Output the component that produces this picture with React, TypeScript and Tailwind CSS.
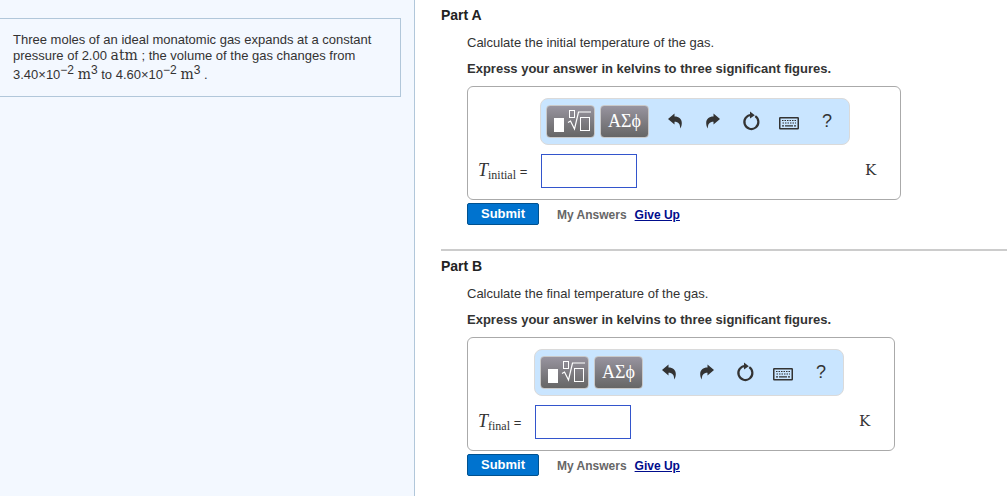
import { useId } from "react";

type PartProps = {
  title: string;
  question: string;
  subscript: string;
  labelWidth: string;
};

const ICON_BUTTON = "flex h-8 w-[38px] items-center justify-center text-[#333]";
const TEMPLATE_BUTTON =
  "flex h-[33px] w-[49px] items-center justify-center rounded border border-[#c9c9c9] bg-linear-to-b from-[#98949f] to-[#666] text-white";

export default function App() {
  return (
    <div className="flex min-h-screen bg-white font-['Liberation_Sans',Arial,sans-serif] text-[13px] text-[#333]">
      <aside className="w-[415px] shrink-0 border-r border-[#b1c7da] bg-[#f3f8ff] pt-[18px] pr-[13px]">
        <div className="border border-l-0 border-[#b1c7da] pt-[13px] pr-3 pb-[10px] pl-[13px]">
          <p className="leading-4">
            Three moles of an ideal monatomic gas expands at a constant pressure of 2.00 <Unit>atm</Unit> ; the volume of the gas
            changes from
          </p>
          <p className="leading-[22px]">
            3.40×10
            <Power>−2</Power> <Unit>m</Unit>
            <Power>3</Power> to 4.60×10
            <Power>−2</Power> <Unit>m</Unit>
            <Power>3</Power> .
          </p>
        </div>
      </aside>

      <main className="min-w-0 flex-1 pl-[26px]">
        <Part title="Part A" question="Calculate the initial temperature of the gas." subscript="initial" labelWidth="w-[62px]" />
        <hr className="mt-6 border-t-2 border-[#ccc]" />
        <Part title="Part B" question="Calculate the final temperature of the gas." subscript="final" labelWidth="w-[56px]" />
      </main>
    </div>
  );
}

function Part({ title, question, subscript, labelWidth }: PartProps) {
  const inputId = useId();

  return (
    <section className="pt-[7px]">
      <h2 className="text-sm leading-4 font-bold text-[#222]">{title}</h2>
      <div className="pl-[26px]">
        <p className="mt-3 leading-4">{question}</p>
        <p className="mt-[10px] leading-4 font-bold">Express your answer in kelvins to three significant figures.</p>

        <form onSubmit={(event) => event.preventDefault()}>
          <div className="mt-[9px] flex w-fit items-end rounded-md border border-[#aaa] py-[11px] pl-[10px]">
            <label htmlFor={inputId} className={`flex h-[34px] shrink-0 items-center pb-[2px] ${labelWidth}`}>
              <span className="whitespace-nowrap">
                <i className="font-['Liberation_Serif',serif] text-lg">T</i>
                <sub className="bottom-[-3px] font-['Liberation_Serif',serif] text-xs">{subscript}</sub> =
              </span>
            </label>
            <div>
              <Toolbar />
              <input id={inputId} type="text" className="mt-[9px] ml-px block h-[34px] w-24 border border-[#3355cc] bg-white px-2 outline-none" />
            </div>
            <span className="flex h-[34px] w-[50px] items-center pb-[2px] pl-[15px] font-['DejaVu_Serif',serif] text-[15px]">K</span>
          </div>

          <div className="mt-[3px] flex items-center text-xs font-bold">
            <button type="submit" className="h-[22px] w-[72px] rounded-xs border border-[#00518f] bg-[#0073cf] text-[13px] text-white">
              Submit
            </button>
            <span className="ml-[18px] pt-[2px] text-[#666]">My Answers</span>
            <a href="#give-up" className="ml-2 pt-[2px] text-[#000c8c] underline">
              Give Up
            </a>
          </div>
        </form>
      </div>
    </section>
  );
}

function Toolbar() {
  return (
    <div className="flex h-[47px] w-[310px] items-center rounded-lg border border-[#dadada] bg-[#c9e5ff] pb-px pl-[5px]">
      <button type="button" aria-label="Templates" className={TEMPLATE_BUTTON}>
        <svg width="41" height="24" viewBox="0 0 41 24" fill="none" stroke="currentColor">
          <rect x="4" y="9" width="10" height="14" fill="currentColor" stroke="none" />
          <path d="M18 13.5l2.500-1.500 4 8 4-17h12.500" strokeWidth="1.200" />
          <rect x="19.500" y="1.500" width="5" height="7" strokeWidth="1" />
          <rect x="30.500" y="8.500" width="9" height="13" />
        </svg>
      </button>
      <button
        type="button"
        aria-label="Symbols"
        className={`${TEMPLATE_BUTTON} ml-[5px] pb-px font-['Liberation_Serif',serif] text-lg leading-none`}
      >
        ΑΣϕ
      </button>
      <div className="ml-[7px] flex">
        <button type="button" aria-label="Undo" className={ICON_BUTTON}>
          <UndoIcon />
        </button>
        <button type="button" aria-label="Redo" className={ICON_BUTTON}>
          <UndoIcon className="-scale-x-100" />
        </button>
        <button type="button" aria-label="Reset" className={ICON_BUTTON}>
          <svg width="18" height="20" viewBox="0 0 18 20" fill="none">
            <path d="M13.300 5.200A7 7 0 1 1 9 4" stroke="currentColor" strokeWidth="2.200" />
            <path d="M8 0.500l4.800 3.700L8 7.500z" fill="currentColor" />
          </svg>
        </button>
        <button type="button" aria-label="Keyboard shortcuts" className={ICON_BUTTON}>
          <KeyboardIcon />
        </button>
        <button type="button" aria-label="Help" className={`${ICON_BUTTON} text-lg`}>
          ?
        </button>
      </div>
    </div>
  );
}

function UndoIcon({ className }: { className?: string }) {
  return (
    <svg width="14" height="16" viewBox="0 0 14 16" fill="currentColor" className={className}>
      <path d="M0 6L6.500 0.500v3C11 3.500 13.800 6 13.800 10c0 2-.5 4-1.600 5.500C12.200 11 10.500 8.800 6.500 8.800V11.500z" />
    </svg>
  );
}

function KeyboardIcon() {
  return (
    <svg width="20" height="18" viewBox="0 0 20 18" fill="none" stroke="currentColor">
      <rect x="0.750" y="5.750" width="18.500" height="11" rx="0.500" strokeWidth="1.500" />
      <path d="M3 8.500h14M3.500 11h13.500" strokeDasharray="1.500 1" strokeWidth="1.200" />
      <path d="M3 13.800h2M6 13.800h8M15 13.800h2" strokeWidth="1.200" />
    </svg>
  );
}

function Unit({ children }: { children: React.ReactNode }) {
  return <span className="font-['DejaVu_Serif',serif] text-sm leading-none">{children}</span>;
}

function Power({ children }: { children: React.ReactNode }) {
  return <sup className="-top-[5px] text-xs leading-none">{children}</sup>;
}
